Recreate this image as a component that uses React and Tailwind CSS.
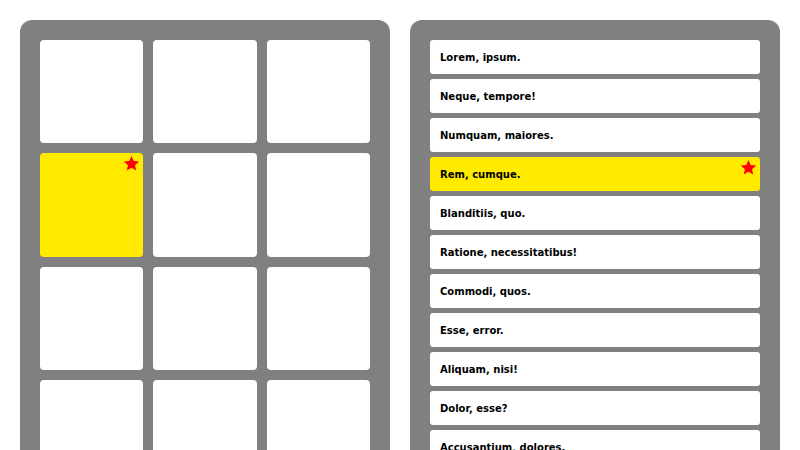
import React from "react";

const Star = ({ className }) => (
  <svg viewBox="0 0 24 24" className={className} fill="#ff0000">
    <path d="M12 1.5l3.1 7.1 7.7.7-5.8 5.1 1.7 7.6L12 18l-6.7 4 1.7-7.6L1.2 9.3l7.7-.7z" />
  </svg>
);

const items = [
  "Lorem, ipsum.",
  "Neque, tempore!",
  "Numquam, maiores.",
  "Rem, cumque.",
  "Blanditiis, quo.",
  "Ratione, necessitatibus!",
  "Commodi, quos.",
  "Esse, error.",
  "Aliquam, nisi!",
  "Dolor, esse?",
  "Accusantium, dolores.",
  "Quis, sit.",
];

export default function App() {
  return (
    <div className="w-[800px] h-[450px] overflow-hidden bg-white flex gap-5 px-5 pt-5" style={{ fontFamily: "'DejaVu Sans', sans-serif" }}>
      <div className="w-[370px] shrink-0 bg-[#808080] rounded-t-xl p-5 h-[600px]">
        <div className="grid grid-cols-3 gap-[10px]">
          {Array.from({ length: 15 }).map((_, i) => (
            <div
              key={i}
              className={`relative aspect-square rounded ${i === 3 ? "bg-[#ffea00]" : "bg-white"}`}
            >
              {i === 3 && <Star className="absolute top-[2px] right-[3px] w-[17px] h-[17px]" />}
            </div>
          ))}
        </div>
      </div>
      <div className="w-[370px] shrink-0 bg-[#808080] rounded-t-xl p-5 h-[600px]">
        <div className="flex flex-col gap-[5px]">
          {items.map((t, i) => (
            <div
              key={i}
              className={`relative h-[34px] rounded-[3px] flex items-center px-[10px] text-[10px] font-bold text-black ${i === 3 ? "bg-[#ffea00]" : "bg-white"}`}
            >
              {t}
              {i === 3 && <Star className="absolute top-[2px] right-[3px] w-[17px] h-[17px]" />}
            </div>
          ))}
        </div>
      </div>
    </div>
  );
}
